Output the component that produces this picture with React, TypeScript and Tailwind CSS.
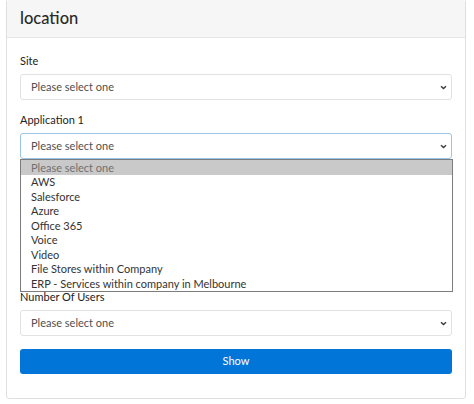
import React from 'react'

const font = { fontFamily: 'Lato, "Noto Sans", "Liberation Sans", sans-serif' }

const options = [
  'AWS',
  'Salesforce',
  'Azure',
  'Office 365',
  'Voice',
  'Video',
  'File Stores within Company',
  'ERP - Services within company in Melbourne',
]

function Chevron() {
  return (
    <svg width="7" height="5" viewBox="0 0 7 5" className="shrink-0">
      <path d="M1 1.2 L3.5 3.6 L6 1.2" fill="none" stroke="#3a3a3a" strokeWidth="1.4" />
    </svg>
  )
}

function SelectBox({ focused = false }: { focused?: boolean }) {
  return (
    <div
      className={`h-[26px] flex items-center justify-between pl-[10px] pr-[4px] rounded-[3px] border bg-white text-[11px] text-[#4f4f4f] ${
        focused ? 'border-[#9ac6e6]' : 'border-[#e2e2e2]'
      }`}
    >
      <span>Please select one</span>
      <Chevron />
    </div>
  )
}

function Field({ label, hidden = false, children }: { label: string; hidden?: boolean; children: React.ReactNode }) {
  return (
    <div className={`mb-[11px] ${hidden ? 'invisible' : ''}`}>
      <label className="block h-[18px] leading-[18px] mb-[4px] text-[11px] text-[#222]">{label}</label>
      {children}
    </div>
  )
}

export default function App() {
  return (
    <div className="w-[474px] h-[404px] bg-white overflow-hidden" style={font}>
      <div className="ml-[6px] -mt-px w-[460px] border border-[#dfdfdf] rounded-[3px]">
        <div className="h-[38px] flex items-center px-[13px] bg-[#f6f6f6] border-b border-[#e6e6e6]">
          <h2 className="text-[16.5px] text-[#2a2a2a] font-medium">location</h2>
        </div>

        <div className="px-[13px] pt-[14px] pb-[24px]">
          <Field label="Site">
            <SelectBox />
          </Field>

          <Field label="Application 1">
            <div className="relative">
              <SelectBox focused />
              <ul className="absolute z-10 left-0 -right-px top-full bg-white border border-[#7c7c7c] text-[11px] text-[#333]">
                <li className="h-[15px] leading-[15px] pl-[10px] bg-[#c9c9c9] text-[#707070]">Please select one</li>
                {options.map((o) => (
                  <li key={o} className="h-[14.5px] leading-[14.5px] pl-[10px] whitespace-nowrap">
                    {o}
                  </li>
                ))}
              </ul>
            </div>
          </Field>

          {/* fields hidden behind the open list */}
          <Field label="Application 2" hidden>
            <SelectBox />
          </Field>

          <Field label="Application 3" hidden>
            <SelectBox />
          </Field>

          <Field label="Number Of Users">
            <SelectBox />
          </Field>

          <button className="w-full h-[25px] rounded-[3px] bg-[#0275d8] text-white text-[11px]">Show</button>
        </div>
      </div>
    </div>
  )
}
